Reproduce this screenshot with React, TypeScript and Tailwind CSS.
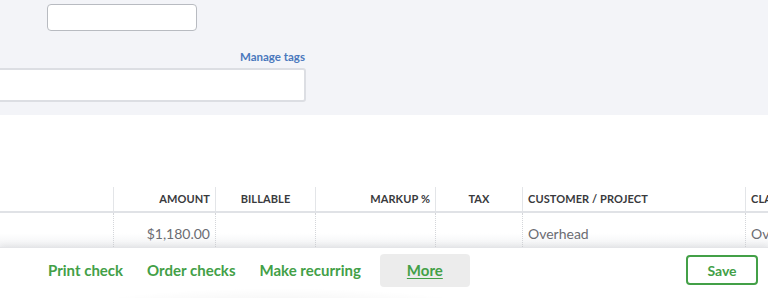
import React from 'react';

const font = { fontFamily: 'Lato, "Open Sans", Arial, sans-serif' };

interface ColProps {
  label: string;
  width: string;
  align: 'left' | 'center' | 'right';
  value?: string;
  divider?: boolean;
}

const columns: ColProps[] = [
  { label: '', width: 'w-[113px]', align: 'right' },
  { label: 'AMOUNT', width: 'w-[102px]', align: 'right', value: '$1,180.00', divider: true },
  { label: 'BILLABLE', width: 'w-[100px]', align: 'center', divider: true },
  { label: 'MARKUP %', width: 'w-[120px]', align: 'right', divider: true },
  { label: 'TAX', width: 'w-[87px]', align: 'center', divider: true },
  { label: 'CUSTOMER / PROJECT', width: 'w-[223px]', align: 'left', value: 'Overhead', divider: true },
  { label: 'CLASS', width: 'w-[100px]', align: 'left', value: 'Overhead', divider: true },
];

const alignClass = { left: 'justify-start text-left', center: 'justify-center text-center', right: 'justify-end text-right' };

export default function App() {
  return (
    <div className="w-[768px] h-[298px] overflow-hidden bg-white relative" style={font}>
      {/* Top form panel */}
      <div className="h-[115px] bg-[#f3f4f8] relative">
        <div className="absolute left-[47px] top-[4px] w-[150px] h-[27px] bg-white border border-[#b8bbc1] rounded-[4px]"></div>
        <div className="absolute right-[463px] top-[48px] text-[11.5px] font-bold text-[#4a78bd] whitespace-nowrap">Manage tags</div>
        <div className="absolute left-[-10px] top-[68px] w-[316px] h-[34px] bg-white border-2 border-[#dcdee3] rounded-[3px]"></div>
      </div>

      {/* Table */}
      <div className="mt-[72px] flex w-[900px]">
        {columns.map((c, i) => (
          <div key={i} className={`${c.width} shrink-0 flex flex-col`}>
            <div className={`h-[24px] flex items-center pt-[1px] px-[5px] ${alignClass[c.align]} ${c.divider ? 'border-l border-[#e3e5e8]' : ''}`}>
              <span className="text-[11px] font-bold text-[#393a3d] tracking-[0.1px] whitespace-nowrap">{c.label}</span>
            </div>
            <div className="h-[2px] bg-[#e0e2e6]"></div>
            <div className={`h-[34px] flex items-center pt-[6px] px-[5px] bg-gradient-to-b from-white from-60% to-[#f1f2f4] ${alignClass[c.align]} ${c.divider ? 'border-l border-dotted border-[#d4d6da]' : ''}`}>
              {c.value && <span className="text-[14px] text-[#6b6c72] whitespace-nowrap">{c.value}</span>}
            </div>
          </div>
        ))}
      </div>

      {/* Footer */}
      <div className="h-[51px] border-t border-[#e4e5e8] shadow-[0_-2px_6px_rgba(0,0,0,0.06)] bg-white relative flex items-start pt-[6px]">
        <div className="absolute left-[60px] bottom-[-40px] w-[440px] h-[50px] rounded-full bg-[radial-gradient(ellipse_at_center,rgba(0,0,0,0.07),rgba(0,0,0,0)_70%)]"></div>
        <div className="relative h-[33px] flex items-center pl-[48px] gap-[24px] text-[15px] font-bold text-[#43a047]">
          <span>Print check</span>
          <span>Order checks</span>
          <span>Make recurring</span>
        </div>
        <div className="relative ml-[19px] w-[90px] h-[33px] rounded-[4px] bg-[#ececec] flex items-center justify-center text-[15px] font-bold text-[#43a047] underline underline-offset-2">More</div>
        <button className="relative ml-auto mr-[10px] mt-[1px] w-[72px] h-[30px] rounded-[4px] border-2 border-[#43a047] bg-white text-[14px] font-bold text-[#43a047]">Save</button>
      </div>
    </div>
  );
}
